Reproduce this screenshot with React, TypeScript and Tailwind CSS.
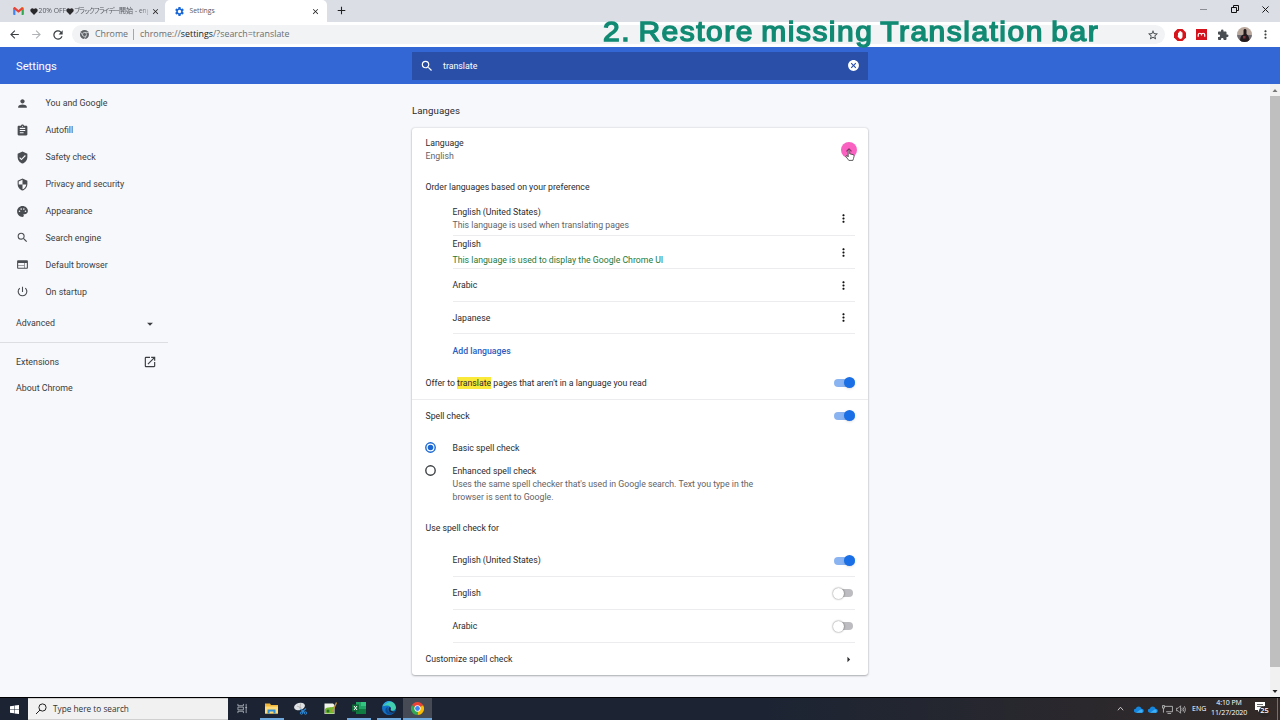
import type { ReactNode } from 'react'
import {
  MdArrowBack, MdArrowForward, MdArrowDropDown, MdArrowRight, MdAssignment, MdCancel, MdClose,
  MdExtension, MdMoreVert, MdOpenInNew, MdPalette, MdPerson, MdPowerSettingsNew, MdRefresh,
  MdSearch, MdSecurity, MdSettings, MdStarBorder, MdVerifiedUser, MdWeb, MdAdd, MdExpandLess,
} from 'react-icons/md'

const nav = [
  { label: 'You and Google', Icon: MdPerson },
  { label: 'Autofill', Icon: MdAssignment },
  { label: 'Safety check', Icon: MdVerifiedUser },
  { label: 'Privacy and security', Icon: MdSecurity },
  { label: 'Appearance', Icon: MdPalette },
  { label: 'Search engine', Icon: MdSearch },
  { label: 'Default browser', Icon: MdWeb },
  { label: 'On startup', Icon: MdPowerSettingsNew },
]

function Toggle({ on }: { on: boolean }) {
  return on ? (
    <span className="relative mr-[13px] flex h-[8px] w-[21px] rounded-full bg-[#8ab4f1]">
      <span className="absolute -top-[1.5px] right-0 h-[11px] w-[11px] rounded-full bg-[#1a6fe6] shadow-sm" />
    </span>
  ) : (
    <span className="relative mr-[15px] flex h-[8px] w-[19px] rounded-full bg-[#bdbdc1]">
      <span className="absolute -left-[1.5px] -top-[1.5px] h-[11px] w-[11px] rounded-full bg-white shadow-[0_0_2px_rgba(0,0,0,0.6)]" />
    </span>
  )
}

function Radio({ checked }: { checked?: boolean }) {
  return (
    <svg viewBox="0 0 11 11" className={`-ml-[0.500px] h-[11px] w-[11px] ${checked ? 'text-[#1a67d2]' : 'text-[#3c4043]'}`}>
      <circle cx="5.500" cy="5.500" r="4.700" fill="none" stroke="currentColor" strokeWidth="1.400" />
      {checked && <circle cx="5.500" cy="5.500" r="2.800" fill="currentColor" />}
    </svg>
  )
}

function Row({ className, children, action }: { className: string; children: ReactNode; action?: ReactNode }) {
  return (
    <div className={`flex items-center justify-between ${className}`}>
      <div>{children}</div>
      {action}
    </div>
  )
}

function Dots() {
  return <MdMoreVert size={13} className="mr-[5.500px] mt-[1px] text-[#111]" />
}

function GmailIcon() {
  return (
    <svg viewBox="0 0 24 18" className="h-[8px] w-[11px] shrink-0">
      <path d="M0 3v13a2 2 0 0 0 2 2h3V7z" fill="#4285f4" />
      <path d="M24 3v13a2 2 0 0 1-2 2h-3V7z" fill="#34a853" />
      <path d="M19 2v6l5-4V2.500c0-2.500-3-3.500-5-2z" fill="#fbbc04" />
      <path d="M0 4l12 9 12-9-4-4-8 6.500L4 0C2 0 0 1 0 4z" fill="#ea4335" />
    </svg>
  )
}

function ChromeMono() {
  return (
    <svg viewBox="0 0 24 24" className="h-[9px] w-[9px]">
      <circle cx="12" cy="12" r="12" fill="#5f6368" />
      <circle cx="12" cy="12" r="5.500" fill="#5f6368" stroke="#f1f3f4" strokeWidth="1.600" />
      <path d="M12 6.500h11M7.300 15L2 6M16.700 15L11.500 24" stroke="#f1f3f4" strokeWidth="1.600" />
    </svg>
  )
}

function ChromeLogo() {
  return (
    <svg viewBox="0 0 24 24" className="h-[13px] w-[13px]">
      <path d="M12 12L1.600 6A12 12 0 0 1 22.400 6z" fill="#ea4335" />
      <path d="M12 12L22.400 6A12 12 0 0 1 12 24z" fill="#fbbc04" />
      <path d="M12 12v12A12 12 0 0 1 1.600 6z" fill="#34a853" />
      <circle cx="12" cy="12" r="5.800" fill="#fff" />
      <circle cx="12" cy="12" r="4.400" fill="#4285f4" />
    </svg>
  )
}

function Cloud() {
  return (
    <svg viewBox="0 0 20 13" className="h-[7px] w-[10px]">
      <path d="M4 13a4 4 0 0 1-.5-8A6 6 0 0 1 15 5a4 4 0 0 1 1 8z" fill="#1685dd" />
      <path d="M4 13L14 6a4 4 0 0 1 2 7z" fill="#3fb0f5" />
    </svg>
  )
}

function Heart() {
  return (
    <svg viewBox="0 0 24 22" className="h-[7px] w-[8px] shrink-0">
      <path d="M12 22L2 12C-3 5 5-4 12 3c7-7 15 2 10 9z" fill="#2a2a2c" />
    </svg>
  )
}

function TabStrip() {
  return (
    <div className="flex h-[22px] bg-[#dcdee6] font-['Open_Sans','Noto_Sans_CJK_JP',sans-serif] text-[7px] text-[#55585e]">
      <div className="flex w-[165px] items-center pl-[13px]">
        <GmailIcon />
        <span className="ml-[6px] flex w-[118px] shrink-0 items-center whitespace-nowrap [mask-image:linear-gradient(90deg,#000_92%,#0006)]">
          <Heart />
          <span className="ml-[0.500px] text-[6.800px]">20% OFF</span>
          <Heart />
          <span className="text-[6.500px] tracking-[-1.600px]">ブラックフライデー</span>
          <span className="ml-[1px]">開始</span>
          <span className="ml-[2px] text-[6.600px]">- eng</span>
        </span>
        <MdClose size={9} className="ml-[3px] shrink-0 text-[#222]" />
      </div>
      <div className="flex w-[162px] items-center rounded-t-[5px] bg-white pl-[9px]">
        <MdSettings size={11} className="text-[#1a67d8]" />
        <span className="ml-[4.500px] flex-1 text-[6.800px]">Settings</span>
        <MdClose size={9} className="mr-[7px] text-[#222]" />
      </div>
      <MdAdd size={13} className="ml-[8px] mt-[4px] text-[#222]" />
      <div className="ml-auto flex h-[18px] items-center text-[#111]">
        <svg viewBox="0 0 8 8" className="mr-[23px] h-[8px] w-[8px]"><path d="M0 4.500h7" stroke="#8b8d93" /></svg>
        <svg viewBox="0 0 8 8" className="mr-[23px] h-[8px] w-[8px]" fill="none" stroke="currentColor">
          <path d="M.5 2.500h5v5h-5zM2.500 2.500v-2h5v5h-2" />
        </svg>
        <svg viewBox="0 0 8 8" className="mr-[11px] h-[7px] w-[7px]" stroke="currentColor" strokeWidth="1.100"><path d="M.5.5l7 7M7.500.5l-7 7" /></svg>
      </div>
    </div>
  )
}

function Toolbar() {
  return (
    <div className="flex h-[25px] items-center bg-white text-[#3c4043]">
      <MdArrowBack size={13} className="ml-[8px]" />
      <MdArrowForward size={13} className="ml-[9px] text-[#b0b2b5]" />
      <MdRefresh size={14} className="ml-[8px]" />
      <div className="ml-[7px] flex h-[19px] w-[1093px] items-center rounded-full bg-[#f1f3f4] pl-[8px] pr-[6px] font-['Open_Sans',sans-serif] text-[8.850px] text-[#6a6d71]">
        <ChromeMono />
        <span className="ml-[6px] w-[33px] whitespace-nowrap">Chrome</span>
        <span className="ml-[5px] h-[11px] w-px bg-[#a5a7aa]" />
        <span className="ml-[6px] tracking-[0.020px]">chrome://<span className="text-[#202124]">settings</span>/?search=translate</span>
        <MdStarBorder size={12} className="ml-auto text-[#3c4043]" />
      </div>
      <svg viewBox="0 0 24 24" className="ml-[9px] h-[12px] w-[12px] shrink-0">
        <path d="M7 0h10l7 7v10l-7 7H7l-7-7V7z" fill="#d7141a" />
        <path d="M8 12V8h1.500V5.500h2V4h2v1.500h2V7H17v8c0 3-2 5-4 5s-4-2-6-6l1-1z" fill="#fff" />
      </svg>
      <svg viewBox="0 0 22 22" className="ml-[10px] h-[11px] w-[11px] shrink-0">
        <path d="M0 0h22v22H0z" fill="#d5121b" />
        <path d="M4.500 15.500v-4c0-4 6.500-4 6.500 0 0-4 6.500-4 6.500 0v4M11 11v2" fill="none" stroke="#fff" strokeWidth="2.400" />
      </svg>
      <MdExtension size={12} className="ml-[10px] text-[#4a4d51]" />
      <svg viewBox="0 0 30 30" className="ml-[8px] h-[15px] w-[15px] shrink-0 rounded-full">
        <path d="M0 0h30v30H0z" fill="#b9a79b" />
        <path d="M0 16h30v14H0z" fill="#6d6a70" />
        <path d="M6 30c0-10 3-14 7-15V7c0-4 6-4 6 0v7c4 3 6 8 6 16z" fill="#22191c" />
        <path d="M12 18h5v5h-5z" fill="#80353c" />
      </svg>
      <MdMoreVert size={13} className="ml-[7px] shrink-0" />
    </div>
  )
}

function Header() {
  return (
    <div className="flex h-[37px] items-center bg-[#3367d6] text-white">
      <span className="w-[412px] pl-[16px] pt-[3px] text-[11.200px]">Settings</span>
      <div className="flex h-[28px] w-[456px] items-center bg-[#2a4fa8] pl-[8px] pr-[8px]">
        <MdSearch size={14} />
        <span className="ml-[9px] flex-1 pt-[2px] text-[8.800px]">translate</span>
        <MdCancel size={13} />
      </div>
    </div>
  )
}

function Sidebar() {
  return (
    <div className="w-[412px] pt-[6px] text-[8.850px] text-[#3a3d41]">
      {nav.map(({ label, Icon }) => (
        <div key={label} className="flex h-[26.900px] items-center pl-[16px]">
          <Icon size={13} className="text-[#4a4d51]" />
          <span className="ml-[16.500px] pt-[1px]">{label}</span>
        </div>
      ))}
      <div className="w-[168px] border-b border-[#dcdee2]">
        <div className="flex h-[37px] items-center justify-between pl-[16px] pr-[11px]">
          <span className="pt-[1px]">Advanced</span>
          <MdArrowDropDown size={14} />
        </div>
      </div>
      <div className="mt-[5px] flex h-[27px] w-[168px] items-center justify-between pl-[16px] pr-[11px]">
        <span className="pt-[2px]">Extensions</span>
        <MdOpenInNew size={14} />
      </div>
      <div className="flex h-[27px] items-center pl-[16px]">About Chrome</div>
    </div>
  )
}

const langRow = 'ml-[27px] border-b border-[#ececee]'
const line = <div className="ml-[27px] mr-[13px] border-t border-[#ececee]" />

function LanguageCard() {
  return (
    <div className="flex h-[547px] flex-col rounded-[3px] bg-white pl-[13.500px] text-[8.720px] leading-[13px] text-[#2a2b2e] shadow-[0_1px_2px_rgba(60,64,67,0.35),0_0_2px_rgba(60,64,67,0.25)]">
      <Row
        className="h-[44px]"
        action={
          <div className="relative mr-[11px] mt-px flex h-[16px] w-[16px] items-center justify-center rounded-full bg-[#f962c0]">
            <MdExpandLess size={12} className="text-[#a8207a]" />
            <svg viewBox="0 0 16 20" className="absolute left-[4px] top-[7px] h-[12px] w-[10px]">
              <path d="M5 1.500c1.500-1 2.500 0 2.500 1V8l6 1.500c1 .5 1.500 1 1.300 2.500l-1 4-1 3H6L1.500 13c-.8-1.500.8-2.500 2-1.500L5 13z" fill="#fff" stroke="#333" strokeWidth="1.300" />
            </svg>
          </div>
        }
      >
        <p>Language</p>
        <p className="text-[#5f6368]">English</p>
      </Row>
      <Row className="h-[30px] pt-[2px]">Order languages based on your preference</Row>
      <div className="mr-[13px]">
        <Row className={`h-[34px] [&>div]:pt-[2px] ${langRow}`} action={<Dots />}>
          <p>English (United States)</p>
          <p className="text-[#5f6368]">This language is used when translating pages</p>
        </Row>
        <Row className={`h-[33px] ${langRow}`} action={<Dots />}>
          <p className="leading-[16px]">English</p>
          <p className="leading-[16px] text-[#1d7a3c]">This language is used to display the Google Chrome UI</p>
        </Row>
        <Row className={`h-[33px] [&>div]:pt-[2px] ${langRow}`} action={<Dots />}>Arabic</Row>
        <Row className={`h-[32px] [&>div]:pt-[2px] ${langRow}`} action={<Dots />}>Japanese</Row>
      </div>
      <Row className="ml-[27px] h-[33px] pt-[2px] font-medium text-[#2a5dc0]">Add languages</Row>
      <Row className="-ml-[13.500px] h-[33px] border-b border-[#ececee] pl-[13.500px] [&>div]:pt-[2px]" action={<Toggle on />}>
        Offer to <mark className="bg-[#fbe93a] py-px text-inherit">translate</mark> pages that aren't in a language you read
      </Row>
      <Row className="h-[32px] [&>div]:pt-[2px]" action={<Toggle on />}>Spell check</Row>
      <div className="flex h-[32px] items-center">
        <Radio checked />
        <span className="ml-[16.500px] pt-[2px]">Basic spell check</span>
      </div>
      <div className="flex h-[46px]">
        <span className="mt-[1px]"><Radio /></span>
        <div className="ml-[16.500px] w-[320px]">
          <p className="pt-px">Enhanced spell check</p>
          <p className="leading-[13.300px] text-[#5f6368]">
            Uses the same spell checker that's used in Google search. Text you type in the<br />browser is sent to Google.
          </p>
        </div>
      </div>
      <Row className="h-[36px] pt-[2px]">Use spell check for</Row>
      <Row className="ml-[27px] h-[31px]" action={<Toggle on />}>English (United States)</Row>
      {line}
      <Row className="ml-[27px] h-[32px]" action={<Toggle on={false} />}>English</Row>
      {line}
      <Row className="ml-[27px] h-[32px]" action={<Toggle on={false} />}>Arabic</Row>
      {line}
      <Row className="h-[32px]" action={<MdArrowRight size={13} className="mr-[13px]" />}>Customize spell check</Row>
    </div>
  )
}

function Scrollbar() {
  return (
    <div className="ml-auto flex w-[10px] flex-col items-center justify-between bg-[#f1f1f1]">
      <svg viewBox="0 0 10 12" className="h-[12px] w-[10px]"><path d="M2.500 8h5L5 5z" fill="#777" /></svg>
      <div className="w-full flex-1 bg-[#bfbfbf]" />
      <svg viewBox="0 0 10 30" className="h-[30px] w-[10px]"><path d="M2.500 23h5L5 26z" fill="#222" /></svg>
    </div>
  )
}

function TaskItem({ children, open, active }: { children: ReactNode; open?: boolean; active?: boolean }) {
  return (
    <div className={`flex h-full w-[29.200px] flex-col items-center ${active ? 'bg-[#454a55]' : ''}`}>
      <div className="flex flex-1 items-center">{children}</div>
      <div className={`h-[2px] ${active ? 'w-full' : 'w-[24px]'} ${open ? 'bg-[#6fa8dc]' : ''}`} />
    </div>
  )
}

function Taskbar() {
  return (
    <div className="flex h-[23px] border-t border-black bg-gradient-to-r from-[#1c2433] from-60% to-[#332a28] font-['Open_Sans',sans-serif] text-white">
      <div className="flex w-[28px] items-center justify-center">
        <svg viewBox="0 0 18 18" className="h-[9px] w-[9px]" fill="#fff">
          <path d="M0 2.500L8 1.300v7.200H0zM9 1.200L18 0v8.500H9zM0 9.500h8v7.200L0 15.500zM9 9.500h9V18l-9-1.200z" />
        </svg>
      </div>
      <div className="flex w-[200px] items-center border-y border-[#d0d0d0] bg-[#f1f1f1] pl-[7px] text-[8.250px] text-[#333]">
        <svg viewBox="0 0 12 12" className="h-[12px] w-[12px]" fill="none" stroke="#222"><circle cx="7.500" cy="4.500" r="3.600" /><path d="M5 7L1 11" /></svg>
        <span className="ml-[6px] pt-[1px]">Type here to search</span>
      </div>
      <div className="flex">
        <TaskItem>
          <svg viewBox="0 0 12 12" className="h-[11px] w-[11px]" fill="none" stroke="#c8ccd2" strokeWidth=".8"><path d="M1 1v2h6V1M1 11V9h6v2M1 4.500h6v3H1zM10 1v10M9 5h2" /></svg>
        </TaskItem>
        <TaskItem open>
          <svg viewBox="0 0 26 22" className="h-[11px] w-[13px]">
            <path d="M0 1h10l2 3h14v17H0z" fill="#f0b83c" />
            <path d="M0 7h26v14H0z" fill="#fddb78" />
            <path d="M5 21v-8h16v8h-4v-4H9v4z" fill="#2f8fd8" />
          </svg>
        </TaskItem>
        <TaskItem>
          <svg viewBox="0 0 26 26" className="h-[13px] w-[13px]">
            <ellipse cx="11" cy="9" rx="11" ry="7" fill="#dfe2e4" transform="rotate(-15 11 9)" />
            <path d="M6 8l9 4M13 3l-1 12" stroke="#9b8f8a" />
            <path d="M13 14l9 8M24 13l-9 8" stroke="#2e85cf" strokeWidth="2.500" />
            <circle cx="15" cy="22" r="2.500" fill="none" stroke="#2e85cf" strokeWidth="2" />
            <circle cx="23" cy="22" r="2.500" fill="none" stroke="#2e85cf" strokeWidth="2" />
          </svg>
        </TaskItem>
        <TaskItem>
          <svg viewBox="0 0 26 26" className="h-[13px] w-[13px]">
            <path d="M1 3h17l3 3v18H1z" fill="#f1f4ea" />
            <path d="M2 14c5-5 10-2 18-5v14H2z" fill="#74b62e" />
            <circle cx="8" cy="18" r="3" fill="#286f2b" />
            <path d="M25 1l-8 18" stroke="#c9963f" strokeWidth="2.500" />
          </svg>
        </TaskItem>
        <TaskItem open>
          <svg viewBox="0 0 28 24" className="h-[12px] w-[14px]">
            <path d="M8 0h20v24H8z" fill="#21a366" />
            <path d="M18 0h10v8H18z" fill="#33c481" />
            <path d="M8 14h20v10H8z" fill="#107c41" />
            <path d="M0 5h14v14H0z" fill="#0e6b38" />
            <path d="M4 8l6 8M10 8l-6 8" stroke="#fff" strokeWidth="2" />
          </svg>
        </TaskItem>
        <TaskItem open>
          <svg viewBox="0 0 28 28" className="h-[14px] w-[14px]">
            <circle cx="14" cy="14" r="14" fill="#1272c8" />
            <path d="M1 11C4-2 26-4 28 13c0 6-8 8-11 5 3-5-2-10-8-9-4 0-7 2-8 2z" fill="#42cfae" />
            <path d="M1 11C4 2 12-1 18 1c-6 1-10 5-17 10z" fill="#2ba7e8" />
            <path d="M12 12c-4 7 3 13 12 11-8 8-19 2-17-6 0-3 3-5 5-5z" fill="#0d4a94" />
            <path d="M15 12c4 1 2 5 2 6 3 4 8 3 10 1l-3 4c-8 2-14-4-9-11z" fill="#1c2433" />
          </svg>
        </TaskItem>
        <TaskItem open active><ChromeLogo /></TaskItem>
      </div>
      <div className="ml-auto flex items-center text-[7.400px]">
        <svg viewBox="0 0 8 8" className="mb-[2px] mr-[10px] h-[7px] w-[7px]" fill="none" stroke="#ddd"><path d="M1 6l3-3.500L7 6" /></svg>
        <span className="mr-[4px]"><Cloud /></span>
        <span className="mr-[4px]"><Cloud /></span>
        <svg viewBox="0 0 12 10" className="mr-[3px] h-[9px] w-[11px]" fill="none" stroke="#c9c9c9" strokeWidth=".9"><path d="M2.500 1.500h9v6h-7M6 9.500h4M.5.500h2v3h-2zM1.500 3.500v5" /></svg>
        <svg viewBox="0 0 12 10" className="mr-[6px] h-[9px] w-[10px]" fill="none" stroke="#c9c9c9" strokeWidth=".9"><path d="M.5 3.500h2l3-3v9l-3-3h-2zM7 3.500q1 1.500 0 3M8.500 2.500q2 2.500 0 5M10 1q3 4 0 8" /></svg>
        <span className="w-[15px] text-[7px]">ENG</span>
        <div className="ml-[4px] w-[36px] whitespace-nowrap pb-[2px] text-center text-[7px] leading-[10.500px] tracking-[-0.100px]">
          <p>4:10 PM</p>
          <p>11/27/2020</p>
        </div>
        <div className="relative ml-[8px] mr-[7px] h-[15px] w-[15px]">
          <svg viewBox="0 0 10 10" className="h-[10px] w-[10px]"><path d="M0 0h10v8H5L3 10V8H0z" fill="#fff" /><path d="M2 2.500h6M2 4.500h6" stroke="#444" strokeWidth=".8" /></svg>
          <span className="absolute left-[4px] top-[4px] flex h-[11px] w-[11px] items-center justify-center rounded-full bg-[#2b2626] text-[7.400px] font-semibold leading-none">25</span>
        </div>
        <span className="mr-[2px] h-full w-px bg-[#77706e]" />
      </div>
    </div>
  )
}

export default function App() {
  return (
    <div className="relative flex h-[720px] w-[1280px] flex-col overflow-hidden bg-[#f7f8fc] font-[Roboto,sans-serif]">
      <TabStrip />
      <Toolbar />
      <Header />
      <div className="flex h-[613px]">
        <Sidebar />
        <div className="w-[456px]">
          <h2 className="flex h-[44px] items-center pt-[11px] text-[9.700px] tracking-[0.060px] text-[#2a2b2e]">Languages</h2>
          <LanguageCard />
        </div>
        <Scrollbar />
      </div>
      <Taskbar />
      {/* Caption laid over the browser window */}
      <div className="absolute left-[603px] top-[15px] origin-left scale-x-[1.070] whitespace-nowrap font-['Liberation_Sans',sans-serif] text-[28px] leading-[34px] tracking-[1.400px] text-[#118a73] [word-spacing:-2.200px] [-webkit-text-stroke:1.400px_#118a73]">
        2. Restore missing Translation bar
      </div>
    </div>
  )
}
